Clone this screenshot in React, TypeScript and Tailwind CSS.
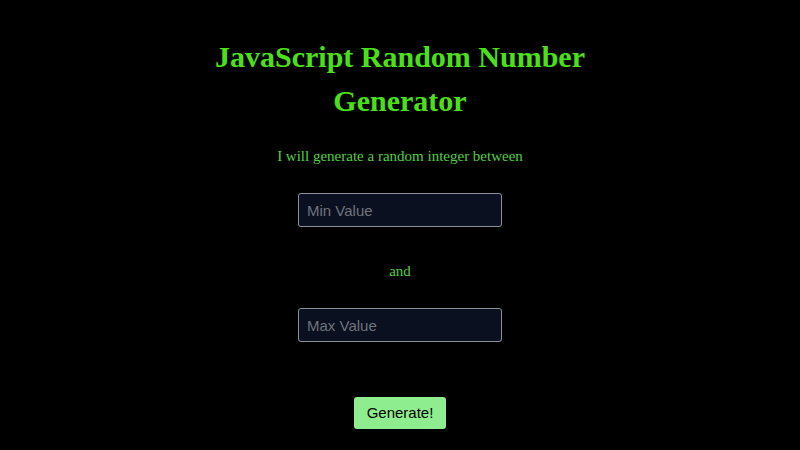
export default function App() {
  return (
    <div className="min-h-[450px] w-full bg-black flex flex-col items-center" style={{ fontFamily: '"Liberation Serif", serif' }}>
      <h1 className="pt-[35px] text-center font-bold text-[30px] leading-[44px] text-[#4be01a]">
        <span className="block">JavaScript Random Number</span>
        <span className="block">Generator</span>
      </h1>
      <p className="mt-[24px] text-[15px] leading-[18px] text-[#52cf42]">I will generate a random integer between</p>
      <input
        type="number"
        placeholder="Min Value"
        className="mt-[28px] w-[204px] h-[34px] rounded-[3px] border border-[#8b9099] bg-[#0b1020] px-[8px] text-[15px] text-gray-200 placeholder:text-[#6f737c] outline-none"
        style={{ fontFamily: '"Liberation Sans", Arial, sans-serif' }}
      />
      <p className="mt-[35px] text-[15px] leading-[18px] text-[#52cf42]">and</p>
      <input
        type="number"
        placeholder="Max Value"
        className="mt-[28px] w-[204px] h-[34px] rounded-[3px] border border-[#8b9099] bg-[#0b1020] px-[8px] text-[15px] text-gray-200 placeholder:text-[#6f737c] outline-none"
        style={{ fontFamily: '"Liberation Sans", Arial, sans-serif' }}
      />
      <button
        className="mt-[55px] w-[92px] h-[32px] rounded-[3px] bg-[#8eed8e] text-black text-[15px]"
        style={{ fontFamily: '"Liberation Sans", Arial, sans-serif' }}
      >
        Generate!
      </button>
    </div>
  );
}
